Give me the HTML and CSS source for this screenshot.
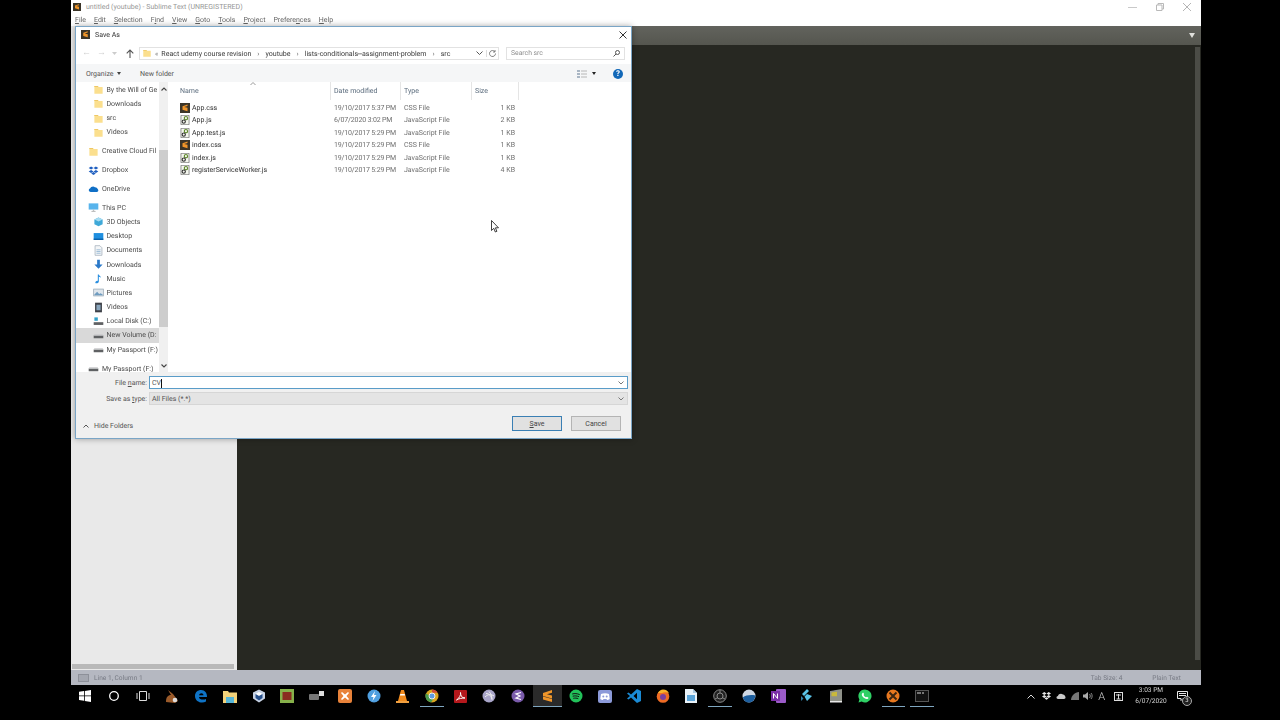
FILE: index.html
```html
<!DOCTYPE html>
<html lang="en">
<head>
    <meta charset="UTF-8">
    <title>Save As - Sublime Text</title>
    <link rel="stylesheet" href="styles.css">
</head>
<body>
<svg class="defs" width="0" height="0">
    <symbol id="subl" viewBox="0 0 16 16">
        <rect width="16" height="16" fill="#3b3528"/>
        <path d="M12 3 4 5.6v3L12 11V8L6.6 6.8 12 5.2zM4 8.6v2.6l8 2.4v-2.6z" fill="#f0962a" transform="translate(0 -.6)"/>
    </symbol>
    <symbol id="jsfile" viewBox="0 0 16 16">
        <path d="M1.500.5h13v15h-13z" fill="#f4f6ee" stroke="#555"/>
        <circle cx="9.500" cy="5" r="2.600" fill="none" stroke="#5f8a2c" stroke-width="1.800"/>
        <circle cx="6" cy="10.500" r="2.600" fill="none" stroke="#333" stroke-width="1.800"/>
    </symbol>
    <symbol id="folder" viewBox="0 0 16 16">
        <path d="M2 3h5l1 1.500h6V14H2z" fill="#fbdf8e"/>
        <path d="M2 3h5l1 1.500H2z" fill="#eec765"/>
    </symbol>
    <symbol id="drive" viewBox="0 0 16 16">
        <path d="M1 8h14v4H1z" fill="#5f6163"/>
        <path d="M1 8h14l-1-2H2z" fill="#c8c9cb"/>
    </symbol>
</svg>

<div class="screen">
    <div class="titlebar">
        <svg class="tb-icon"><use href="#subl"/></svg>
        <span class="tb-text">untitled (youtube) - Sublime Text (UNREGISTERED)</span>
        <div class="win-btns">
            <svg width="10" height="10" viewBox="0 0 10 10"><path d="M0 5.500h9" stroke="#c9c9c9"/></svg>
            <svg width="10" height="10" viewBox="0 0 10 10"><path d="M1.500 3h5.500v5.500H1.500zM3 3V1.500h5.500V7H7" fill="none" stroke="#b9b9b9"/></svg>
            <svg width="10" height="10" viewBox="0 0 10 10"><path d="M1 1l8 8M9 1 1 9" stroke="#b5b5b5"/></svg>
        </div>
    </div>
    <div class="menubar">
        <span><u>F</u>ile</span><span><u>E</u>dit</span><span><u>S</u>election</span><span>F<u>i</u>nd</span><span><u>V</u>iew</span><span><u>G</u>oto</span><span><u>T</u>ools</span><span><u>P</u>roject</span><span>Prefere<u>n</u>ces</span><span><u>H</u>elp</span>
    </div>
    <div class="main">
        <div class="sidebar">
            <div class="side-scroll"></div>
        </div>
        <div class="editor-wrap">
            <div class="tabbar"><span class="tab-arrow"></span></div>
            <div class="editor"><div class="ed-scroll"></div></div>
        </div>
    </div>
    <div class="statusbar">
        <span class="st-box"></span>
        <span class="st-left">Line 1, Column 1</span>
        <span class="st-tab">Tab Size: 4</span>
        <span class="st-syntax">Plain Text</span>
    </div>
    <div class="taskbar">
        <div class="task-icons">
            <div class="ti"><svg width="12" height="12" viewBox="0 0 12 12"><path d="M0 1.700 5 1v4.500H0zM5.800.9 12 0v5.500H5.800zM0 6.300h5v4.500l-5-.7zM5.800 6.300H12V12l-6.200-.9z" fill="#fff"/></svg></div>
            <div class="ti"><svg width="12" height="12" viewBox="0 0 12 12"><circle cx="6" cy="6" r="4.300" fill="none" stroke="#fff" stroke-width="1.300"/></svg></div>
            <div class="ti"><svg width="14" height="12" viewBox="0 0 14 12"><path d="M3.500 1.500h7v9h-7zM1 3v6M13 3v6" fill="none" stroke="#ddd"/></svg></div>
            <div class="ti"><svg width="14" height="14" viewBox="0 0 14 14"><path d="M1 13c0-5 2-7 5-7L3 1l5 4 3 4 2 3-3 2z" fill="#9a5a2a"/><circle cx="10" cy="11" r="2.300" fill="#ddd"/></svg></div>
            <div class="ti"><svg width="14" height="14" viewBox="0 0 14 14"><path d="M1 7c0-4 3-6 6-6 4 0 6 3 6 7H5c0 3 5 3 7 2v2.500C8 15 1 13 1 7zm4-.800h4.500C9.500 3.500 5.500 3.500 5 6.200z" fill="#0f73c5"/></svg></div>
            <div class="ti"><svg width="14" height="13" viewBox="0 0 14 13"><path d="M0 1h5l1 1.500h8V13H0z" fill="#f3d27a"/><path d="M3 7h8v6H3z" fill="#57b6d8"/></svg></div>
            <div class="ti"><svg width="14" height="14" viewBox="0 0 14 14"><path d="M7 .5 13 3.500v6L7 13.500 1 9.500v-6z" fill="#c9d4e6"/><path d="M7 3 10.500 5 7 7 3.500 5z" fill="#fff"/><path d="M3.500 5 7 7v4.500L3.500 9zM10.500 5 7 7v4.500L10.500 9z" fill="#27508c"/></svg></div>
            <div class="ti"><svg width="14" height="14" viewBox="0 0 14 14"><rect width="14" height="14" fill="#86b04a"/><rect x="2.500" y="3" width="9" height="8" fill="#8a2b20"/></svg></div>
            <div class="ti"><svg width="15" height="10" viewBox="0 0 15 10"><rect y="3" width="10" height="6" rx="1" fill="#777"/><rect x="10" y="0" width="5" height="5" fill="#ddd"/></svg></div>
            <div class="ti"><svg width="14" height="14" viewBox="0 0 14 14"><rect width="14" height="14" rx="2" fill="#e8823a"/><path d="M4 3 7 5.500 10 3l1 1-2.500 3L11 10l-1 1-3-2.500L4 11l-1-1 2.500-3L3 4z" fill="#fff"/></svg></div>
            <div class="ti"><svg width="14" height="14" viewBox="0 0 14 14"><circle cx="7" cy="7" r="6.500" fill="#4f9fe0"/><path d="M8 2 4 8h2.500L5.500 12l4-6H7z" fill="#fff"/></svg></div>
            <div class="ti"><svg width="13" height="14" viewBox="0 0 13 14"><path d="M5 1h3l3 11H2z" fill="#f08a1d"/><path d="M4.300 5h4.400l.4 1.500H3.900z" fill="#fff"/><path d="M0 12h13v2H0z" fill="#f0a040"/></svg></div>
            <div class="ti on"><svg width="14" height="14" viewBox="0 0 14 14"><circle cx="7" cy="7" r="6.500" fill="#d9a520"/><path d="M7 .5a6.500 6.500 0 0 1 5.600 3.300H7z" fill="#cf4a3a"/><path d="M1 4.500a6.500 6.500 0 0 0 5 9L9 9z" fill="#4a9c4e"/><circle cx="7" cy="7" r="3" fill="#5d9be0" stroke="#eee"/></svg></div>
            <div class="ti"><svg width="13" height="13" viewBox="0 0 13 13"><rect width="13" height="13" rx="1" fill="#b5181c"/><path d="M2.500 10c3-2 4.500-5 4-7.500C6.500 6 8 8 11 8c-3 0-6 .5-8.500 2z" fill="none" stroke="#fff"/></svg></div>
            <div class="ti"><svg width="14" height="14" viewBox="0 0 14 14"><circle cx="7" cy="7" r="6.500" fill="#a9a5c9"/><path d="M3 8c3-3 6-3 9-1M4 4.500c3 0 5 2 6 6M7 2.500c2 2 3 5 3 8" fill="none" stroke="#eee"/></svg></div>
            <div class="ti"><svg width="14" height="14" viewBox="0 0 14 14"><circle cx="7" cy="7" r="6.500" fill="#7a5bab"/><path d="M10 3.500 5 5l4 2-4 2 5 1.500" fill="none" stroke="#fff" stroke-width="1.200"/></svg></div>
            <div class="ti on active"><svg width="11" height="12" viewBox="0 0 11 12"><path d="M10 0 1 3v3l9 2.500V5.500L5 4.200 10 2.800zM1 6.500v3L10 12V9z" fill="#f0962a"/></svg></div>
            <div class="ti"><svg width="14" height="14" viewBox="0 0 14 14"><circle cx="7" cy="7" r="6.500" fill="#22c25a"/><path d="M3.200 5c2.500-.7 5-.5 7.500.6M3.700 7.200c2.200-.5 4.200-.4 6.300.5M4.300 9.300c1.800-.4 3.400-.3 5 .4" fill="none" stroke="#111"/></svg></div>
            <div class="ti"><svg width="14" height="13" viewBox="0 0 14 13"><rect width="14" height="13" rx="2" fill="#8c9ad9"/><path d="M3 4c2.500-1 5.500-1 8 0l.7 5c-1 .7-2 1-2.700.9L8.500 9h-3L5 9.900C4.300 10 3.300 9.700 2.300 9z" fill="#fff"/><circle cx="5.300" cy="6.500" r="1" fill="#8c9ad9"/><circle cx="8.700" cy="6.500" r="1" fill="#8c9ad9"/></svg></div>
            <div class="ti"><svg width="14" height="14" viewBox="0 0 14 14"><path d="M10 0 14 2v10l-4 2L4 8.500 1.500 10.500 0 9.500 3 7 0 4.500 1.500 3.500 4 5.500zM10 3.800 6.500 7l3.500 3.200z" fill="#1a8ad4"/></svg></div>
            <div class="ti"><svg width="14" height="14" viewBox="0 0 14 14"><circle cx="7" cy="7.500" r="6.300" fill="#ee6b24"/><path d="M2 4c1-2 3-3.500 5-3.500 3 0 5 1.500 6 4C11 3 8 3 6 4z" fill="#f8b42c"/><circle cx="7" cy="8" r="3" fill="#7a3fa0"/></svg></div>
            <div class="ti"><svg width="12" height="14" viewBox="0 0 12 14"><path d="M0 0h8l4 4v10H0z" fill="#e9f2f8"/><path d="M2 6h8v6H2z" fill="#5ba4d8"/><path d="M8 0l4 4H8z" fill="#a8c8e0"/></svg></div>
            <div class="ti on"><svg width="14" height="14" viewBox="0 0 14 14"><circle cx="7" cy="7" r="6.300" fill="#222" stroke="#8a8a8a"/><circle cx="7" cy="7" r="3" fill="none" stroke="#8a8a8a"/><path d="M7 1v3M2 10l3-1.500M12 10 9 8.500" stroke="#8a8a8a"/></svg></div>
            <div class="ti"><svg width="14" height="14" viewBox="0 0 14 14"><circle cx="7" cy="7" r="6.500" fill="#cfd8e4"/><path d="M.8 8.500C4 6 9 5.500 13.400 6.500 13 11 10 13.500 7 13.500S1.500 11.500.8 8.500z" fill="#1d5f9f"/></svg></div>
            <div class="ti"><svg width="15" height="14" viewBox="0 0 15 14"><rect x="5" y="0" width="10" height="14" rx="1" fill="#9b5bc8"/><rect x="0" y="2" width="9" height="10" fill="#7b2fa8"/><path d="M2.500 9.500v-5l4 5v-5" fill="none" stroke="#fff"/></svg></div>
            <div class="ti"><svg width="14" height="14" viewBox="0 0 14 14"><path d="M7 0 2 5l2 2 5-5zM4.500 7.500 7 5l5 2-5 5z" fill="#5bc4e8"/><path d="M1 7 3.500 9.500 1 12z" fill="#2f7fa8"/></svg></div>
            <div class="ti"><svg width="14" height="14" viewBox="0 0 14 14"><path d="M1 2 13 0v12H1z" fill="#8f9189"/><path d="M2.500 3.500 8 2.700v4.500H2.500z" fill="#c9b93a"/><path d="M1 12h12v1.500H1z" fill="#e8e8e8"/></svg></div>
            <div class="ti"><svg width="14" height="14" viewBox="0 0 14 14"><path d="M7 .5a6.500 6.500 0 1 1-3.300 12.100L.5 13.500l.9-3.100A6.500 6.500 0 0 1 7 .5z" fill="#2fd065"/><path d="M4.500 4c.8-.8 1.300.2 1.500 1 .1.600-.6.800-.3 1.300.5 1 1.200 1.600 2.200 2 .5.200.7-.6 1.300-.4.800.3 1.700.8 1 1.500-1.500 1.500-4 0-5.200-1.300C3.700 6.800 3.300 5 4.500 4z" fill="#fff"/></svg></div>
            <div class="ti on"><svg width="14" height="14" viewBox="0 0 14 14"><circle cx="7" cy="7" r="6.500" fill="#e8781f"/><path d="M3.500 3.500l7 7M10.500 3.500l-7 7" stroke="#3a2410" stroke-width="2"/></svg></div>
            <div class="ti on"><svg width="14" height="12" viewBox="0 0 14 12"><rect x=".5" y=".5" width="13" height="11" fill="#111" stroke="#555"/><path d="M2 3h4M7 3h2" stroke="#ddd"/></svg></div>
        </div>
        <div class="tray">
            <svg class="tr-chev" width="8" height="5" viewBox="0 0 8 5"><path d="M.5 4.500 4 1l3.500 3.500" fill="none" stroke="#ddd"/></svg>
            <svg class="tr-i" width="9" height="8" viewBox="0 0 9 8"><path d="M2.300 0 4.500 1.500 2.300 3 0 1.500zM6.700 0 9 1.500 6.700 3 4.500 1.500zM2.300 3 4.500 4.500 2.300 6 0 4.500zM6.700 3 9 4.500 6.700 6 4.500 4.500zM2.500 6.500 4.500 5.200l2 1.300-2 1.300z" fill="#e8e8e8"/></svg>
            <svg class="tr-i" width="10" height="6" viewBox="0 0 10 6"><path d="M2 6C0 6 0 3 2 3c.5-2 3-3 5-1.500C9 1.500 11 6 8 6z" fill="#c8c8c8"/></svg>
            <svg class="tr-i tight" width="8" height="8" viewBox="0 0 8 8"><path d="M0 8c0-4 4-8 8-8v8z" fill="#777"/></svg>
            <svg class="tr-i" width="10" height="8" viewBox="0 0 10 8"><path d="M0 2.500h2L5 0v8L2 5.500H0z" fill="#aaa"/><path d="M6.500 2c1 1 1 3 0 4M8 1c1.500 1.500 1.500 4.500 0 6" fill="none" stroke="#888"/></svg>
            <span class="tr-a">A</span>
            <svg class="tr-i" width="9" height="9" viewBox="0 0 9 9"><rect x=".5" y=".5" width="8" height="8" fill="none" stroke="#ddd"/><path d="M2 3h5M4.500 2v5M2.500 7h4" stroke="#ddd"/></svg>
            <div class="clock"><span>3:03 PM</span><span>6/07/2020</span></div>
            <div class="notif">
                <svg width="11" height="10" viewBox="0 0 11 10"><path d="M.5.500h10v7H6l-2 2v-2H.5z" fill="none" stroke="#e8e8e8"/><path d="M2 2.500h7M2 4.500h7" stroke="#e8e8e8"/></svg>
                <span class="notif-count">3</span>
            </div>
        </div>
    </div>

    <!-- dialogo encima del editor -->
    <div class="dialog">
        <div class="dlg-title">
            <svg class="dlg-icon"><use href="#subl"/></svg>
            <span>Save As</span>
            <svg class="dlg-close" width="8" height="8" viewBox="0 0 8 8"><path d="M.5.500l7 7M7.500.500l-7 7" stroke="#333"/></svg>
        </div>
        <div class="addr-row">
            <span class="nav-arrow first">←</span>
            <span class="nav-arrow">→</span>
            <svg class="nav-caret" width="5" height="3" viewBox="0 0 5 3"><path d="M0 0h5L2.500 3z" fill="#ccc"/></svg>
            <svg class="nav-up" width="8" height="9" viewBox="0 0 8 9"><path d="M4 9V1M.7 4.300 4 1l3.300 3.300" fill="none" stroke="#555" stroke-width="1.100"/></svg>
            <div class="addr">
                <svg class="addr-folder"><use href="#folder"/></svg>
                <span class="cr faint">«</span>
                <span class="cr">React udemy course revision</span><span class="sep">›</span>
                <span class="cr">youtube</span><span class="sep">›</span>
                <span class="cr">lists-conditionals--assignment-problem</span><span class="sep">›</span>
                <span class="cr">src</span>
                <svg class="addr-chev" width="7" height="4" viewBox="0 0 7 4"><path d="M.5.500 3.500 3.500 6.500.500" fill="none" stroke="#555"/></svg>
                <svg class="addr-ref" width="7" height="7" viewBox="0 0 7 7"><path d="M5.800 1.600A3 3 0 1 0 6.500 3.500M6 0v2H4" fill="none" stroke="#666" stroke-width=".8"/></svg>
            </div>
            <div class="search">
                <span>Search src</span>
                <svg width="7" height="7" viewBox="0 0 7 7"><circle cx="4.500" cy="2.500" r="2" fill="none" stroke="#555"/><path d="M3 4 .5 6.500" stroke="#555"/></svg>
            </div>
        </div>
        <div class="toolbar">
            <span class="organize">Organize</span>
            <span class="caret"></span>
            <span class="newfolder">New folder</span>
            <svg class="view-ic" width="10" height="8" viewBox="0 0 10 8"><path d="M0 0h3v2H0zM0 3h3v2H0zM0 6h3v2H0z" fill="#a9b6c4"/><path d="M4 1h6M4 4h6M4 7h6" stroke="#b6b6b6"/></svg>
            <span class="caret dark"></span>
            <span class="help">?</span>
        </div>
        <div class="dlg-body">
            <div class="nav-pane">
                <div class="nav-list">
                    <div class="nr sub"><svg><use href="#folder"/></svg>By the Will of Ge</div>
                    <div class="nr sub"><svg><use href="#folder"/></svg>Downloads</div>
                    <div class="nr sub"><svg><use href="#folder"/></svg>src</div>
                    <div class="nr sub"><svg><use href="#folder"/></svg>Videos</div>
                    <div class="nr top gap"><svg><use href="#folder"/></svg>Creative Cloud Fil</div>
                    <div class="nr top gap"><svg viewBox="0 0 16 16"><path d="M4.500 2 8 4.300 4.500 6.600 1 4.300zM11.500 2 15 4.300l-3.500 2.300L8 4.300zM4.500 7.200 8 9.500l-3.500 2.300L1 9.500zM11.500 7.200 15 9.500l-3.500 2.300L8 9.500zM4.700 12.500 8 10.300l3.300 2.200L8 14.700z" fill="#1f5fc0"/></svg>Dropbox</div>
                    <div class="nr top gap"><svg viewBox="0 0 16 16"><path d="M4 13C1 13 0 9 3 8c1-3 5-4 7-2 3 0 5 3 5 5 0 1-1 2-2 2z" fill="#0f6fc6"/></svg>OneDrive</div>
                    <div class="nr top gap"><svg viewBox="0 0 16 16"><rect x="1" y="2" width="14" height="9" fill="#58b4ec"/><path d="M5 13h6v1H5z" fill="#999"/><path d="M7 11h2v2H7z" fill="#bbb"/></svg>This PC</div>
                    <div class="nr sub"><svg viewBox="0 0 16 16"><path d="M8 2l6 3v7l-6 3-6-3V5z" fill="#3fa9d8"/><path d="M2 5l6 3 6-3-6-3z" fill="#a6dcf2"/></svg>3D Objects</div>
                    <div class="nr sub"><svg viewBox="0 0 16 16"><rect x="1" y="3" width="14" height="10" fill="#1f8fe0"/><path d="M1 11h14v2H1z" fill="#0a5fa8"/></svg>Desktop</div>
                    <div class="nr sub"><svg viewBox="0 0 16 16"><path d="M3 1h7l3 3v11H3z" fill="#f4f6f8" stroke="#9ba8b4"/><path d="M5 7h6M5 9.500h6M5 12h6" stroke="#7aa5c8"/></svg>Documents</div>
                    <div class="nr sub"><svg viewBox="0 0 16 16"><path d="M6 1h4v7h4l-6 6-6-6h4z" fill="#2b79c9"/></svg>Downloads</div>
                    <div class="nr sub"><svg viewBox="0 0 16 16"><path d="M7 2h1.500c.5 2 3 2.500 3 5-1-1-2-1.500-3-1.500V12c0 2-1.500 3-3.500 3S3 13.500 4 12.300c.7-.8 2-1 3-.8z" fill="#2a8fe0"/></svg>Music</div>
                    <div class="nr sub"><svg viewBox="0 0 16 16"><rect x="1" y="3" width="14" height="10" fill="#dfe6ec" stroke="#8fa0ae"/><path d="M2 11l4-4 3 3 2-1 3 2v1H2z" fill="#6f9cc0"/></svg>Pictures</div>
                    <div class="nr sub"><svg viewBox="0 0 16 16"><rect x="3" y="1" width="10" height="14" fill="#3e4148"/><rect x="5" y="4" width="6" height="8" fill="#8aa6bd"/></svg>Videos</div>
                    <div class="nr sub"><svg viewBox="0 0 16 16"><path d="M1 9h14v4H1z" fill="#5f6163"/><path d="M2 2h5v5H2z" fill="#32a0c8"/></svg>Local Disk (C:)</div>
                    <div class="nr sub sel"><svg><use href="#drive"/></svg>New Volume (D:</div>
                    <div class="nr sub"><svg><use href="#drive"/></svg>My Passport (F:)</div>
                    <div class="nr top gap"><svg><use href="#drive"/></svg>My Passport (F:)</div>
                </div>
                <div class="nav-scroll">
                    <svg class="sc-up" width="6" height="4" viewBox="0 0 6 4"><path d="M.5 3.500 3 1l2.500 2.500" fill="none" stroke="#444" stroke-width="1.100"/></svg>
                    <div class="sc-thumb"></div>
                    <svg class="sc-down" width="6" height="4" viewBox="0 0 6 4"><path d="M.5.500 3 3 5.500.500" fill="none" stroke="#444" stroke-width="1.100"/></svg>
                </div>
            </div>
            <div class="files">
                <svg class="sort-chev" width="6" height="3" viewBox="0 0 6 3"><path d="M.5 3 3 .5 5.500 3" fill="none" stroke="#999"/></svg>
                <div class="fhead">
                    <span class="c-name">Name</span>
                    <span class="c-date">Date modified</span>
                    <span class="c-type">Type</span>
                    <span class="c-size">Size</span>
                </div>
                <div class="frow"><span class="c-name"><svg><use href="#subl"/></svg>App.css</span><span class="c-date">19/10/2017 5:37 PM</span><span class="c-type">CSS File</span><span class="c-size">1 KB</span></div>
                <div class="frow"><span class="c-name"><svg><use href="#jsfile"/></svg>App.js</span><span class="c-date">6/07/2020 3:02 PM</span><span class="c-type">JavaScript File</span><span class="c-size">2 KB</span></div>
                <div class="frow"><span class="c-name"><svg><use href="#jsfile"/></svg>App.test.js</span><span class="c-date">19/10/2017 5:29 PM</span><span class="c-type">JavaScript File</span><span class="c-size">1 KB</span></div>
                <div class="frow"><span class="c-name"><svg><use href="#subl"/></svg>index.css</span><span class="c-date">19/10/2017 5:29 PM</span><span class="c-type">CSS File</span><span class="c-size">1 KB</span></div>
                <div class="frow"><span class="c-name"><svg><use href="#jsfile"/></svg>index.js</span><span class="c-date">19/10/2017 5:29 PM</span><span class="c-type">JavaScript File</span><span class="c-size">1 KB</span></div>
                <div class="frow"><span class="c-name"><svg><use href="#jsfile"/></svg>registerServiceWorker.js</span><span class="c-date">19/10/2017 5:29 PM</span><span class="c-type">JavaScript File</span><span class="c-size">4 KB</span></div>
            </div>
        </div>
        <div class="dlg-foot">
            <div class="field">
                <label>File <u>n</u>ame:</label>
                <div class="fname">CV<i class="text-cursor"></i><svg width="6" height="4" viewBox="0 0 6 4"><path d="M.5.500 3 3 5.500.500" fill="none" stroke="#777"/></svg></div>
            </div>
            <div class="field second">
                <label>Save as <u>t</u>ype:</label>
                <div class="ftype">All Files (*.*)<svg width="6" height="4" viewBox="0 0 6 4"><path d="M.5.500 3 3 5.500.500" fill="none" stroke="#777"/></svg></div>
            </div>
            <div class="foot-row">
                <svg class="hide-chev" width="6" height="4" viewBox="0 0 6 4"><path d="M.5 3.500 3 1l2.500 2.500" fill="none" stroke="#555"/></svg>
                <span class="hide-folders">Hide Folders</span>
                <button class="btn primary"><u>S</u>ave</button>
                <button class="btn">Cancel</button>
            </div>
        </div>
    </div>

    <svg class="pointer" width="8" height="13" viewBox="0 0 8 13"><path d="M.5.500v10l2.300-2.200 1.500 3.700 1.600-.7-1.500-3.500h3.100z" fill="#fff" stroke="#111" stroke-width=".8"/></svg>
</div>
</body>
</html>
```

FILE: styles.css
```css
html, body {
    margin: 0;
    padding: 0;
    background-color: #000;
    height: 100%;
    overflow: hidden;
}
.defs {
    position: absolute;
}
.screen {
    position: relative;
    width: 1130px;
    height: 720px;
    margin-left: 71px;
    display: flex;
    flex-direction: column;
    font-family: Roboto, "Noto Sans", sans-serif;
    font-size: 7px;
    text-rendering: geometricPrecision;
    color: #444;
    filter: blur(0.3px);
    overflow: hidden;
}
u {
    text-underline-offset: 1px;
}

/* ventana de sublime */
.titlebar {
    height: 13px;
    flex: none;
    background-color: #fff;
    display: flex;
    align-items: center;
    padding-left: 2px;
}
.tb-icon {
    width: 8px;
    height: 8px;
    margin-right: 5px;
}
.tb-text {
    color: #969696;
}
.win-btns {
    margin-left: auto;
    margin-right: 9px;
    display: flex;
    gap: 17px;
}
.menubar {
    height: 13px;
    flex: none;
    background-color: #fff;
    display: flex;
    align-items: center;
    padding-left: 4px;
    gap: 8px;
    color: #666;
}
.main {
    flex: 1;
    display: flex;
    min-height: 0;
}
.sidebar {
    width: 166px;
    flex: none;
    background-color: #e9e9e9;
    position: relative;
    display: flex;
    flex-direction: column;
    justify-content: flex-end;
    padding: 0 3px 1px 1px;
    box-sizing: border-box;
}
.side-scroll {
    height: 5px;
    background-color: #b9b9b9;
}
.editor-wrap {
    flex: 1;
    display: flex;
    flex-direction: column;
}
.tabbar {
    height: 19px;
    flex: none;
    background: linear-gradient(#62635d, #55564f);
    display: flex;
    align-items: center;
    justify-content: flex-end;
    padding-right: 6px;
}
.tab-arrow {
    width: 0;
    height: 0;
    border-left: 3px solid transparent;
    border-right: 3px solid transparent;
    border-top: 5px solid #e0e0dc;
}
.editor {
    flex: 1;
    background-color: #272822;
    display: flex;
    justify-content: flex-end;
    padding: 2px 1px 10px 0;
}
.ed-scroll {
    width: 5px;
    background-color: #4b4c46;
}
.statusbar {
    height: 15px;
    flex: none;
    background-color: #b5b8c1;
    display: flex;
    align-items: center;
    color: #777a84;
    font-size: 6.600px;
}
.st-box {
    width: 9px;
    height: 6px;
    margin-left: 7px;
    border: 1px solid #8d9099;
    background-color: #a4a7b0;
}
.st-left {
    margin-left: 5px;
}
.st-tab {
    margin-left: auto;
}
.st-syntax {
    margin-left: 30px;
    margin-right: 20px;
}

/* barra de tareas */
.taskbar {
    height: 35px;
    flex: none;
    background-color: #000;
    display: flex;
    align-items: flex-start;
}
.task-icons {
    display: flex;
    height: 22px;
}
.ti {
    position: relative;
    width: 28.870px;
    height: 22px;
    display: flex;
    align-items: center;
    justify-content: center;
}
.ti.on::after {
    content: "";
    position: absolute;
    left: 2.500px;
    right: 2.500px;
    bottom: 0;
    height: 1px;
    background-color: #7fa6c0;
}
.ti.active {
    background-color: #2a2a2a;
}
.ti.active::after {
    left: 0;
    right: 0;
}
.tray {
    margin-left: auto;
    display: flex;
    align-items: center;
    height: 22px;
    color: #ddd;
}
.tr-chev {
    margin-right: 7px;
}
.tr-i {
    margin-right: 5px;
}
.tr-i.tight {
    margin-right: 4px;
}
.tr-a {
    font-size: 11px;
    margin: 0 9px 0 0;
    color: #ccc;
    font-weight: 300;
}
.clock {
    display: flex;
    flex-direction: column;
    align-items: center;
    width: 38px;
    margin-left: 4px;
    line-height: 11px;
    font-size: 6.600px;
    color: #d4d4d4;
}
.notif {
    position: relative;
    margin-left: 7px;
    margin-right: 13px;
    display: flex;
}
.notif-count {
    position: absolute;
    right: -4px;
    bottom: -5px;
    width: 8px;
    height: 8px;
    border-radius: 50%;
    background-color: #222;
    border: 1px solid #aaa;
    font-size: 6px;
    line-height: 8px;
    text-align: center;
    color: #ddd;
}

/* dialogo */
.dialog {
    position: absolute;
    left: 4px;
    top: 26px;
    width: 557px;
    height: 413px;
    box-sizing: border-box;
    background-color: #fff;
    border: 1px solid #7aa5c6;
    box-shadow: 0 0 6px rgba(0, 0, 0, 0.35);
    display: flex;
    flex-direction: column;
    color: #4c4c4c;
}
.dlg-title {
    height: 15px;
    flex: none;
    display: flex;
    align-items: center;
    padding-left: 5px;
    color: #333;
}
.dlg-icon {
    width: 9px;
    height: 9px;
    margin-right: 5px;
}
.dlg-close {
    margin-left: auto;
    margin-right: 4px;
}
.addr-row {
    height: 22px;
    flex: none;
    display: flex;
    align-items: center;
    position: relative;
}
.nav-arrow {
    color: #cfcfcf;
    font-size: 9px;
    margin-right: 6px;
    line-height: 9px;
}
.nav-arrow.first {
    margin-left: 6px;
}
.nav-caret {
    margin-right: 9px;
}
.nav-up {
    margin-right: 5px;
}
.addr {
    width: 360px;
    height: 13px;
    box-sizing: border-box;
    border: 1px solid #e2e2e2;
    display: flex;
    align-items: center;
    padding-left: 2px;
    color: #3a3a3a;
    font-size: 7.050px;
}
.addr-folder {
    width: 10px;
    height: 12px;
    margin-right: 3px;
}
.cr.faint {
    color: #888;
    margin-right: 3px;
}
.sep {
    margin: 0 6px;
    color: #777;
}
.addr-chev {
    margin-left: auto;
    margin-right: 3px;
}
.addr-ref {
    border-left: 1px solid #ddd;
    padding-left: 2px;
    padding-right: 2px;
}
.search {
    width: 119px;
    height: 13px;
    box-sizing: border-box;
    margin-left: 7px;
    border: 1px solid #e2e2e2;
    display: flex;
    align-items: center;
    justify-content: space-between;
    padding: 0 4px;
    color: #8d8d8d;
    font-size: 6.800px;
}
.toolbar {
    height: 18px;
    box-sizing: border-box;
    padding-top: 1px;
    flex: none;
    background-color: #f5f6f7;
    display: flex;
    align-items: center;
    padding-left: 10px;
    color: #555;
}
.caret {
    width: 0;
    height: 0;
    border-left: 2.500px solid transparent;
    border-right: 2.500px solid transparent;
    border-top: 3px solid #444;
    margin-left: 3px;
}
.caret.dark {
    margin-left: 5px;
    border-top-color: #222;
}
.newfolder {
    margin-left: 19.500px;
}
.view-ic {
    margin-left: auto;
}
.help {
    margin-left: 17px;
    margin-right: 8px;
    width: 10px;
    height: 10px;
    border-radius: 50%;
    background-color: #1268b8;
    color: #fff;
    font-size: 8px;
    font-weight: bold;
    line-height: 10px;
    text-align: center;
}
.dlg-body {
    height: 290px;
    flex: none;
    display: flex;
}
.nav-pane {
    width: 92px;
    flex: none;
    display: flex;
}
.nav-list {
    width: 83px;
    overflow: hidden;
    height: 290px;
    padding-top: 0.600px;
    box-sizing: border-box;
}
.nr {
    height: 14.200px;
    display: flex;
    align-items: center;
    white-space: nowrap;
    overflow: hidden;
    color: #4c4c4c;
}
.nr svg {
    width: 11px;
    height: 11px;
    margin-right: 3px;
    flex: none;
}
.nr.sub {
    padding-left: 16.500px;
}
.nr.top {
    padding-left: 12px;
}
.nr.gap {
    margin-top: 4.700px;
}
.nr.sel {
    background-color: #d9d9d9;
}
.nav-scroll {
    width: 9px;
    background-color: #f0f0f0;
    position: relative;
}
.sc-up {
    position: absolute;
    left: 1.500px;
    top: 5px;
}
.sc-down {
    position: absolute;
    left: 1.500px;
    bottom: 4px;
}
.sc-thumb {
    position: absolute;
    left: 0;
    right: 0;
    top: 68px;
    height: 177px;
    background-color: #cdcdcd;
}
.files {
    flex: 1;
    position: relative;
    padding-left: 12px;
}
.sort-chev {
    position: absolute;
    left: 82px;
    top: 0;
}
.fhead, .frow {
    display: grid;
    grid-template-columns: 151px 70px 71px 47px;
    align-items: center;
}
.fhead {
    height: 18px;
    color: #5a6b7c;
    margin-bottom: 1.600px;
}
.fhead span {
    padding-left: 3px;
    height: 18px;
    line-height: 18.500px;
    border-right: 1px solid #e5e5e5;
    box-sizing: border-box;
}
.fhead .c-name {
    padding-left: 0;
}
.frow {
    height: 12.450px;
    color: #6d6d6d;
}
.frow .c-name {
    color: #333;
    display: flex;
    align-items: center;
    white-space: nowrap;
}
.frow .c-name svg {
    width: 10px;
    height: 10px;
    margin-right: 2px;
    flex: none;
}
.frow .c-date, .frow .c-type {
    padding-left: 3px;
    white-space: nowrap;
}
.frow .c-date {
    letter-spacing: -0.150px;
}
.frow .c-size {
    text-align: right;
    padding-right: 4px;
}
.dlg-foot {
    flex: 1;
    background-color: #f0f0f0;
    padding-top: 4px;
    display: flex;
    flex-direction: column;
}
.field {
    display: flex;
    align-items: center;
    height: 13px;
}
.field.second {
    margin-top: 3px;
}
.field label {
    width: 71px;
    text-align: right;
    margin-right: 2px;
    padding-top: 1px;
    color: #555;
}
.fname, .ftype {
    width: 479px;
    height: 13px;
    box-sizing: border-box;
    display: flex;
    align-items: center;
    padding: 1px 3px 0 2px;
    color: #555;
}
.fname {
    background-color: #fff;
    border: 1px solid #5a9cc8;
}
.ftype {
    background-color: #e4e4e4;
    border: 1px solid #d6d6d6;
}
.fname svg, .ftype svg {
    margin-left: auto;
}
.text-cursor {
    width: 1px;
    height: 9px;
    background-color: #111;
}
.foot-row {
    display: flex;
    align-items: center;
    margin-top: 11px;
    padding-left: 7px;
}
.hide-chev {
    margin-top: 4px;
}
.hide-folders {
    margin-left: 5px;
    margin-top: 4px;
    color: #555;
}
.btn {
    width: 50px;
    height: 15px;
    box-sizing: border-box;
    background-color: #e1e1e1;
    border: 1px solid #b4b4b4;
    padding: 0;
    font: inherit;
    color: #444;
    margin-left: 9px;
}
.btn.primary {
    margin-left: auto;
    border: 1.500px solid #3a7fb4;
}
.foot-row .btn:last-child {
    margin-right: 10px;
}
.pointer {
    position: absolute;
    left: 419.500px;
    top: 220px;
}
```
